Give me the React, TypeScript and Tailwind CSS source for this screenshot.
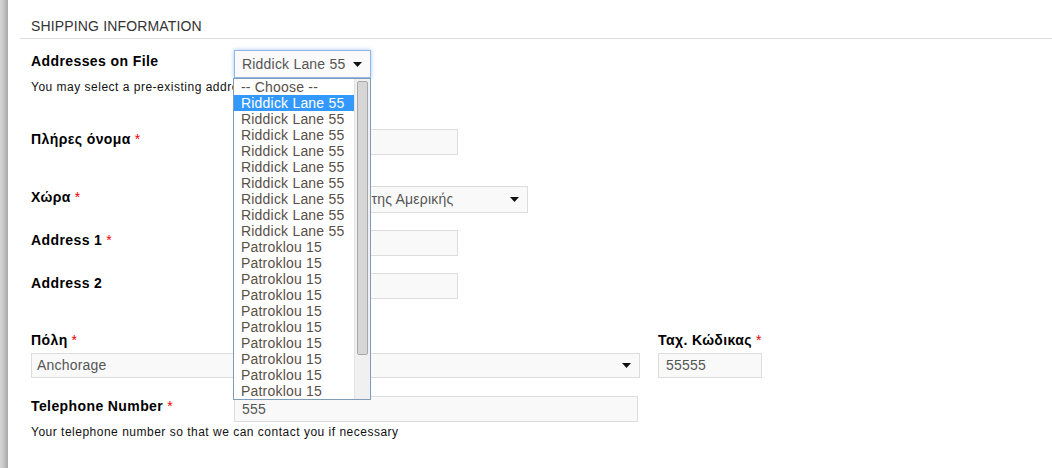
import React from "react";

const font = { fontFamily: '"Liberation Sans", Arial, sans-serif' };

function Arrow() {
  return (
    <svg width="9" height="5" viewBox="0 0 9 5" className="shrink-0">
      <path d="M0 0 L9 0 L4.5 5 Z" fill="#111" />
    </svg>
  );
}

function Req() {
  return <span className="ml-[4px] font-normal text-[#e00]">*</span>;
}

function Input({ w, value }: { w: string; value?: string }) {
  return (
    <div
      className={`${w} h-[26px] border border-[#dddddd] bg-[#f9f9f9] px-[7px] text-[14px] leading-[24px] tracking-[0.2px] text-[#555]`}
    >
      {value}
    </div>
  );
}

function Select({ w, value, h = "h-[27px]" }: { w: string; value?: string; h?: string }) {
  return (
    <div
      className={`${w} ${h} flex items-center justify-between border border-[#dddddd] bg-[#f9f9f9] pl-[7px] pr-[8px] text-[14px] tracking-[0.2px] text-[#555]`}
    >
      <span className="whitespace-nowrap overflow-hidden">{value}</span>
      <Arrow />
    </div>
  );
}

export default function App() {
  const items = [
    "-- Choose --",
    ...Array(9).fill("Riddick Lane 55"),
    ...Array(10).fill("Patroklou 15"),
  ];
  const label = "text-[14px] font-bold leading-[20px] tracking-[0.4px]";
  return (
    <div className="relative flex min-h-[468px] w-[1052px] bg-white overflow-hidden" style={font}>
      <div className="w-[8px] shrink-0 bg-gradient-to-r from-[#d6d6d6] via-[#c4c4c4] to-[#a6a6a6]" />
      <div className="flex-1 pl-[12px]">
        <div className="border-b border-[#dcdcdc] pl-[11px] pt-[18px] pb-[4px] text-[14px] leading-[16px] tracking-[0.15px] text-[#333]">
          SHIPPING INFORMATION
        </div>
        <div className="pl-[11px] text-black">
          {/* Addresses on file */}
          <div className="mt-[11px] flex">
            <div className={`w-[203px] pt-[1px] ${label}`}>Addresses on File</div>
            <div className="flex h-[28px] w-[137px] items-center justify-between border border-[#90b7e6] bg-[#fafafa] pl-[7px] pr-[8px] text-[14px] tracking-[0.2px] text-[#555] shadow-[0_0_4px_rgba(82,150,236,0.55)]">
              <span>Riddick Lane 55</span>
              <Arrow />
            </div>
          </div>
          <div className="mt-[1px] text-[12px] leading-[16px] tracking-[0.5px] text-[#111]">
            You may select a pre-existing address
          </div>

          {/* Full name */}
          <div className="mt-[34px] flex">
            <div className={`w-[203px] ${label}`}>
              Πλήρες όνομα<Req />
            </div>
            <Input w="w-[224px]" value="" />
          </div>

          {/* Country */}
          <div className="mt-[31px] flex">
            <div className={`w-[203px] pt-[1px] ${label}`}>
              Χώρα<Req />
            </div>
            <Select w="w-[294px]" value="Ηνωμένες Πολιτείες της Αμερικής" />
          </div>

          {/* Address 1 */}
          <div className="mt-[17px] flex">
            <div className={`w-[203px] ${label}`}>
              Address 1<Req />
            </div>
            <Input w="w-[224px]" />
          </div>

          {/* Address 2 */}
          <div className="mt-[17px] flex">
            <div className={`w-[203px] ${label}`}>Address 2</div>
            <Input w="w-[224px]" />
          </div>

          {/* City / State / Zip */}
          <div className="mt-[31px] flex">
            <div className="flex w-[610px] flex-col">
              <div className={label}>
                Πόλη<Req />
              </div>
              <div className="mt-[3px] flex gap-[10px]">
                <div className="h-[25px] w-[228px] border border-[#dddddd] bg-[#f9f9f9] px-[5px] text-[14px] leading-[23px] tracking-[0.2px] text-[#555]">
                  Anchorage
                </div>
                <Select w="w-[371px]" h="h-[25px]" value="Alaska" />
              </div>
            </div>
            <div className="ml-[17px] flex flex-col">
              <div className={label}>
                Ταχ. Κώδικας<Req />
              </div>
              <div className="mt-[3px] h-[25px] w-[104px] border border-[#dddddd] bg-[#f9f9f9] px-[7px] text-[14px] leading-[23px] tracking-[0.2px] text-[#555]">
                55555
              </div>
            </div>
          </div>

          {/* Telephone */}
          <div className="mt-[18px] flex">
            <div className={`w-[203px] ${label}`}>
              Telephone Number<Req />
            </div>
            <Input w="w-[404px]" value="555" />
          </div>
          <div className="mt-[2px] text-[12px] leading-[16px] tracking-[0.5px] text-[#111]">
            Your telephone number so that we can contact you if necessary
          </div>
        </div>
      </div>

      {/* Open dropdown list */}
      <div className="absolute left-[233px] top-[78px] flex h-[322px] w-[138px] border border-[#7f9db9] bg-white">
        <div className="flex-1">
          {items.map((t, i) => (
            <div
              key={i}
              className={`h-[16px] pl-[7px] text-[14px] leading-[16px] tracking-[0.2px] whitespace-nowrap ${
                i === 1 ? "bg-[#3399ff] text-white" : "text-[#5a5048]"
              }`}
            >
              {t}
            </div>
          ))}
        </div>
        <div className="w-[16px] border-l border-[#e4e4e4] bg-[#f0f0f0] px-[2px] pt-[2px]">
          <div className="h-[274px] rounded-[2px] border border-[#a8a8a8] bg-[#d6d6d6]" />
        </div>
      </div>
    </div>
  );
}
